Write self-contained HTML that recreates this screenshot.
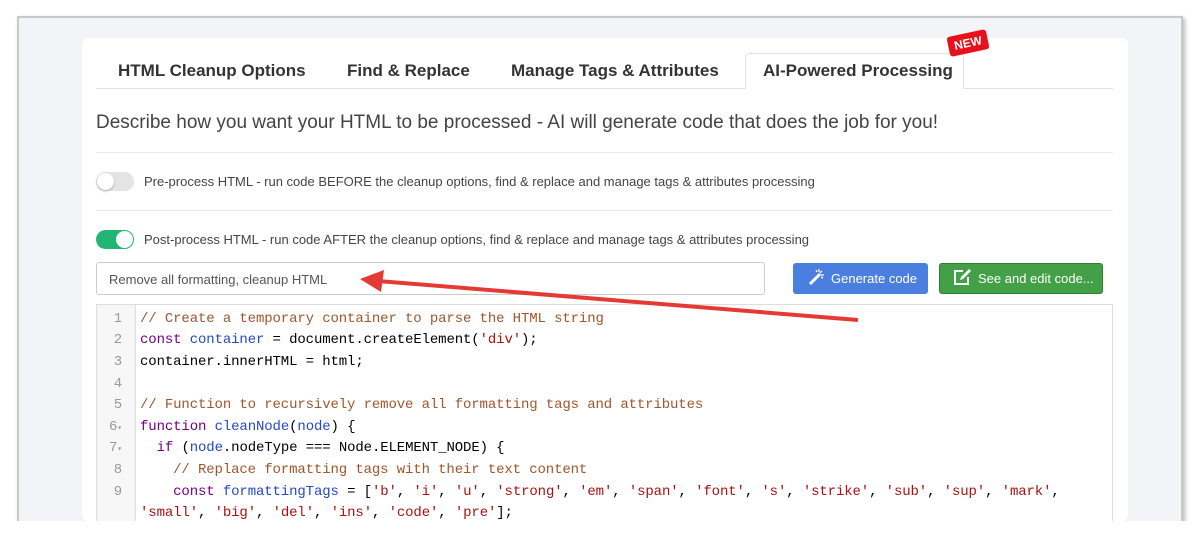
<!DOCTYPE html>
<html><head><meta charset="utf-8"><style>
*{box-sizing:border-box;margin:0;padding:0}
body{width:1200px;height:539px;background:#fff;position:relative;overflow:hidden;font-family:"Liberation Sans",sans-serif}
.frame{position:absolute;left:17px;top:16px;width:1166px;height:505px;background:#f3f4f8;border:2px solid #c9c9c9;border-bottom:none;box-shadow:2px 2px 4px #bbb}
.card{position:absolute;left:82px;top:38px;width:1046px;height:483px;background:#fff;border-radius:6px}
.abs{position:absolute}
.tab{position:absolute;top:61px;font-weight:bold;font-size:17px;color:#333;white-space:nowrap}
.mono{font-family:"Liberation Mono",monospace;font-size:14px;letter-spacing:-0.12px}
.ln{position:absolute;left:94px;width:28px;text-align:right;color:#999}
.cl{position:absolute;left:140px;white-space:pre;color:#000}
.c{color:#a0562c}.k{color:#708}.d{color:#2448c8}.s{color:#a11}
</style></head><body>
<div class="frame"></div>
<div class="card"></div>
<div class="abs" style="left:96px;top:88px;width:1017px;height:1px;background:#dee2e6"></div>
<div class="abs" style="left:745px;top:53px;width:219px;height:36px;background:#fff;border:1px solid #dee2e6;border-bottom:none;border-radius:4px 4px 0 0"></div>
<div class="tab" style="left:118px">HTML Cleanup Options</div>
<div class="tab" style="left:347px">Find &amp; Replace</div>
<div class="tab" style="left:511px">Manage Tags &amp; Attributes</div>
<div class="tab" style="left:763px">AI-Powered Processing</div>
<div class="abs" style="left:948px;top:33px;width:40px;height:20px;background:#e8101a;border-radius:3px;transform:rotate(-12deg);color:#fff;font-weight:bold;font-size:12px;text-align:center;line-height:20px">NEW</div>
<div class="abs" style="left:96px;top:112px;font-size:19px;color:#444">Describe how you want your HTML to be processed - AI will generate code that does the job for you!</div>
<div class="abs" style="left:96px;top:152px;width:1017px;height:1px;background:#e9ecef"></div>
<div class="abs" style="left:96px;top:210px;width:1017px;height:1px;background:#e9ecef"></div>
<div class="abs" style="left:96px;top:172px;width:38px;height:19px;border-radius:10px;background:#e4e4e4"><div class="abs" style="left:1px;top:1px;width:17px;height:17px;border-radius:50%;background:#fff;box-shadow:0 1px 2px #aaa"></div></div>
<div class="abs" style="left:144px;top:174px;font-size:13px;color:#444">Pre-process HTML - run code BEFORE the cleanup options, find &amp; replace and manage tags &amp; attributes processing</div>
<div class="abs" style="left:96px;top:230px;width:38px;height:19px;border-radius:10px;background:#22b573"><div class="abs" style="left:20px;top:1px;width:17px;height:17px;border-radius:50%;background:#fff"></div></div>
<div class="abs" style="left:144px;top:232px;font-size:13px;color:#444">Post-process HTML - run code AFTER the cleanup options, find &amp; replace and manage tags &amp; attributes processing</div>
<div class="abs" style="left:96px;top:262px;width:669px;height:33px;border:1px solid #ccc;border-radius:3px;font-size:13px;color:#555;padding:9px 12px">Remove all formatting, cleanup HTML</div>
<div class="abs" style="left:793px;top:263px;width:135px;height:31px;background:#4a7fe0;border-radius:3px;color:#fff;font-size:13px;line-height:31px;padding-left:38px">Generate code</div>
<svg class="abs" style="left:808px;top:268px" width="18" height="18" viewBox="0 0 18 18"><path d="M2 16L12 6" stroke="#fff" stroke-width="3"/><path d="M11 1v3M14 3l-2 2M16 7h-3M8 2l1 2M15 10l-2-1" stroke="#fff" stroke-width="1.3"/></svg>
<div class="abs" style="left:939px;top:263px;width:164px;height:31px;background:#43a047;border:1px solid #2e7d32;border-radius:3px;color:#fff;font-size:13px;line-height:29px;padding-left:38px">See and edit code...</div>
<svg class="abs" style="left:953px;top:268px" width="20" height="18" viewBox="0 0 20 18"><path d="M10 3H2v13h13V9" fill="none" stroke="#fff" stroke-width="2"/><path d="M7 12l1-3 8-8 2 2-8 8z" fill="#fff"/></svg>
<div class="abs" style="left:96px;top:304px;width:1017px;height:217px;border:1px solid #ddd;border-bottom:none"></div>
<div class="abs" style="left:97px;top:305px;width:39px;height:216px;background:#f7f7f7;border-right:1px solid #ddd"></div>
<div class="mono">
<div class="ln" style="top:311px">1</div><div class="ln" style="top:332px">2</div><div class="ln" style="top:354px">3</div><div class="ln" style="top:376px">4</div><div class="ln" style="top:397px">5</div><div class="ln" style="top:419px">6<span style="font-size:8px">▾</span></div><div class="ln" style="top:440px">7<span style="font-size:8px">▾</span></div><div class="ln" style="top:462px">8</div><div class="ln" style="top:484px">9</div>
<div class="cl c" style="top:311px">// Create a temporary container to parse the HTML string</div>
<div class="cl" style="top:332px"><span class="k">const</span> <span class="d">container</span> = document.createElement(<span class="s">'div'</span>);</div>
<div class="cl" style="top:354px">container.innerHTML = html;</div>
<div class="cl c" style="top:397px">// Function to recursively remove all formatting tags and attributes</div>
<div class="cl" style="top:419px"><span class="k">function</span> <span class="d">cleanNode</span>(<span class="d">node</span>) {</div>
<div class="cl" style="top:440px">  <span class="k">if</span> (<span class="d">node</span>.nodeType === Node.ELEMENT_NODE) {</div>
<div class="cl" style="top:462px">    <span class="c">// Replace formatting tags with their text content</span></div>
<div class="cl" style="top:484px">    <span class="k">const</span> <span class="d">formattingTags</span> = [<span class="s">'b'</span>, <span class="s">'i'</span>, <span class="s">'u'</span>, <span class="s">'strong'</span>, <span class="s">'em'</span>, <span class="s">'span'</span>, <span class="s">'font'</span>, <span class="s">'s'</span>, <span class="s">'strike'</span>, <span class="s">'sub'</span>, <span class="s">'sup'</span>, <span class="s">'mark'</span>,</div>
<div class="cl" style="top:505px"><span class="s">'small'</span>, <span class="s">'big'</span>, <span class="s">'del'</span>, <span class="s">'ins'</span>, <span class="s">'code'</span>, <span class="s">'pre'</span>];</div>
</div>
<div class="abs" style="left:0;top:521px;width:1200px;height:18px;background:#fff"></div>
<svg class="abs" style="left:0;top:0" width="1200" height="539"><path d="M858 320L378 281" stroke="#e53935" stroke-width="4"/><path d="M360 279L384 270L381 292Z" fill="#e53935"/></svg>
</body></html>
